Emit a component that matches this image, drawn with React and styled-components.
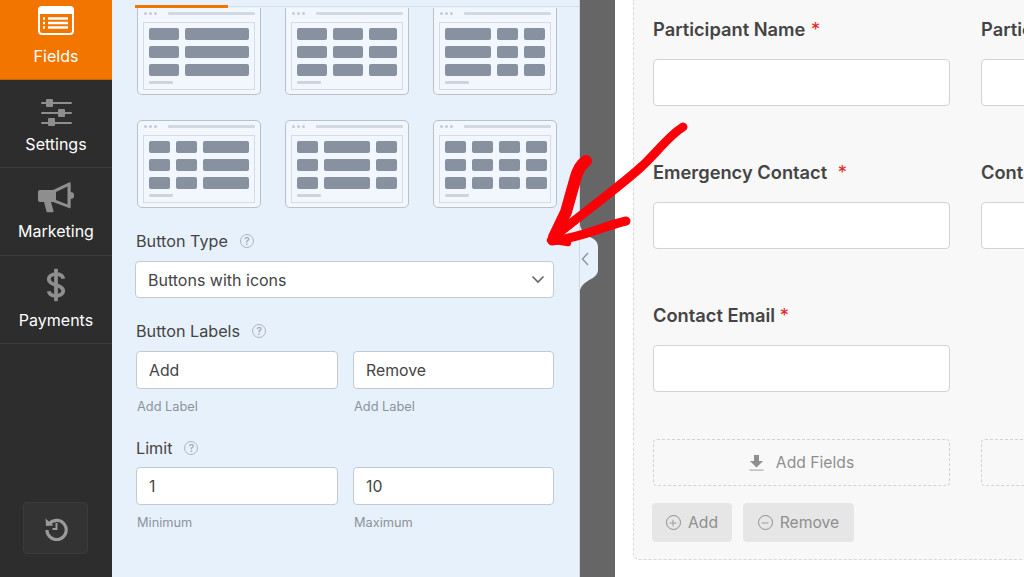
import React from "react";
import styled, { createGlobalStyle } from "styled-components";
import { Plus, Minus } from "lucide-react";

const GlobalStyle = createGlobalStyle`
  html, body {
    margin: 0;
    padding: 0;
    overflow: hidden;
    background: #fff;
  }
  * {
    box-sizing: border-box;
  }
`;

const Page = styled.div`
  position: relative;
  display: flex;
  width: 1024px;
  height: 577px;
  overflow: hidden;
  font-family: Inter, "Liberation Sans", sans-serif;
`;

const Sidebar = styled.nav`
  flex: 0 0 112px;
  display: flex;
  flex-direction: column;
  background: #2d2d2d;
`;

const NavItem = styled.div`
  height: ${({ $height }) => $height}px;
  display: flex;
  flex-direction: column;
  align-items: center;
  justify-content: flex-end;
  gap: ${({ $gap }) => $gap}px;
  padding-bottom: ${({ $pad }) => $pad}px;
  border-bottom: 1px solid ${({ $active }) => ($active ? "#c9620a" : "#3c3c3c")};
  background: ${({ $active }) => ($active ? "#f27500" : "transparent")};
  color: #fff;
  font-size: 16px;
  line-height: 18px;
`;

const SidebarFoot = styled.div`
  margin-top: auto;
  padding: 0 0 23px 23px;
`;

const UndoButton = styled.div`
  width: 65px;
  height: 52px;
  display: flex;
  align-items: center;
  justify-content: center;
  background: #333;
  border: 1px solid #3b3b3b;
  border-radius: 4px;
`;

const Panel = styled.section`
  flex: 0 0 468px;
  min-width: 0;
  padding: 5px 26px 0 24px;
  background: #e7f1fc;
  border-right: 1px solid #cfd6df;
`;

const TabLine = styled.div`
  display: flex;
  height: 3px;
  margin-left: -1px;
  margin-right: -26px;
`;

const TabActive = styled.div`
  width: 93px;
  background: #f27500;
`;

const TabRest = styled.div`
  flex: 1;
  height: 1px;
  background: #d5dde7;
  margin-top: 1px;
`;

const ThumbGrid = styled.div`
  display: grid;
  grid-template-columns: repeat(3, 124px);
  column-gap: 24px;
  row-gap: 25px;
  margin-left: 1px;
`;

const Thumb = styled.div`
  height: ${({ $cut }) => ($cut ? 87 : 88)}px;
  padding: ${({ $cut }) => ($cut ? "4px 5px 4.5px" : "3.5px 5px 4.5px")};
  background: #f2f7fd;
  border: 1.5px solid #b9c1cc;
  border-top-width: ${({ $cut }) => ($cut ? 0 : 1.5)}px;
  border-radius: ${({ $cut }) => ($cut ? "0 0 5px 5px" : "5px")};
  display: flex;
  flex-direction: column;
  gap: 7px;
`;

const ThumbTop = styled.div`
  flex: 0 0 3px;
  display: flex;
  align-items: center;
  gap: 2px;
  padding: 0 0 0 1px;
`;

const ThumbDot = styled.i`
  width: 3px;
  height: 3px;
  border-radius: 50%;
  background: #c5ccd6;
`;

const ThumbBar = styled.i`
  flex: 1;
  height: 3px;
  margin-left: 9px;
  background: #d0d9e4;
  border-radius: 1px;
`;

const ThumbFrame = styled.div`
  flex: 1;
  display: flex;
  flex-direction: column;
  gap: 6px;
  padding: 5px 5px 0;
  border: 1px solid #d5dce6;
`;

const ThumbRow = styled.div`
  display: grid;
  grid-template-columns: ${({ $cols }) => $cols};
  gap: 6px;
`;

const ThumbCell = styled.i`
  height: 12px;
  background: #87919f;
  border-radius: 2px;
`;

const ThumbFoot = styled.i`
  display: block;
  width: 24px;
  height: 3px;
  margin-top: -1px;
  background: #ccd4de;
  border-radius: 1px;
`;

const FieldBlock = styled.div`
  margin-top: ${({ $top }) => $top}px;
`;

const LabelRow = styled.div`
  display: flex;
  align-items: center;
  gap: 12px;
  height: 18px;
  color: #444;
  font-size: 16.2px;
`;

const Help = styled.span`
  width: 14px;
  height: 14px;
  display: flex;
  align-items: center;
  justify-content: center;
  border: 1.3px solid #aeb4bc;
  border-radius: 50%;
  color: #a3a9b2;
  font-size: 10px;
  font-weight: 600;
`;

const SelectBox = styled.div`
  height: 37px;
  margin: 11px -1px 0;
  display: flex;
  align-items: center;
  justify-content: space-between;
  padding: 0 8px 0 12px;
  background: #fff;
  border: 1px solid #c4cad2;
  border-radius: 4px;
  color: #444;
  font-size: 16px;
`;

const InputPair = styled.div`
  display: grid;
  grid-template-columns: 202px 201px;
  gap: 15px;
  margin-top: ${({ $top }) => $top}px;
`;

const PanelInput = styled.div`
  height: 38px;
  display: flex;
  align-items: center;
  padding: 0 12px;
  background: #fff;
  border: 1px solid #c4cad2;
  border-radius: 4px;
  color: #444;
  font-size: 15.8px;
`;

const Hint = styled.div`
  margin-top: 10px;
  margin-left: 1px;
  color: #8c929b;
  font-size: 12.8px;
  line-height: 15px;
`;

const Gutter = styled.div`
  flex: 0 0 35px;
  background: #666;
`;

const Canvas = styled.section`
  flex: 1;
  min-width: 0;
  padding: 0 0 17px 18px;
  background: #fff;
  overflow: hidden;
`;

const RepeaterBox = styled.div`
  width: 460px;
  height: 100%;
  padding: 19px 0 0 19px;
  background: #f8f8f8;
  border: 1px dashed #d8d8d8;
  border-top: 0;
  border-right: 0;
  border-radius: 0 0 0 6px;
`;

const CanvasRow = styled.div`
  display: grid;
  grid-template-columns: 297px 297px;
  gap: 31px;
  height: ${({ $height }) => $height}px;
`;

const CanvasField = styled.div`
  min-width: 0;
`;

const CanvasLabel = styled.div`
  height: 20px;
  color: #444;
  font-size: 18.3px;
  font-weight: 600;
  line-height: 20px;
  white-space: nowrap;

  & > em {
    margin-left: ${({ $mark }) => $mark}px;
    color: #e02b2b;
    font-style: normal;
    font-weight: 400;
  }
`;

const CanvasInput = styled.div`
  height: 47px;
  margin-top: 20px;
  background: #fff;
  border: 1px solid #d3d3d3;
  border-radius: 4px;
`;

const DropZone = styled.div`
  height: 47px;
  display: flex;
  align-items: center;
  justify-content: center;
  gap: 12px;
  border: 1px dashed #d2d2d2;
  border-radius: 4px;
  color: #8f8f8f;
  font-size: 15.7px;
`;

const ActionRow = styled.div`
  display: flex;
  gap: 11px;
  margin-top: 17px;
  margin-left: -1px;
`;

const ActionButton = styled.div`
  width: ${({ $width }) => $width}px;
  height: 39px;
  display: flex;
  align-items: center;
  justify-content: center;
  gap: 7px;
  background: #e6e6e6;
  border-radius: 4px;
  color: #8f8f8f;
  font-size: 15.7px;
`;

const RoundIcon = styled.span`
  width: 15px;
  height: 15px;
  display: flex;
  align-items: center;
  justify-content: center;
  border: 1.3px solid #8f8f8f;
  border-radius: 50%;
`;

const CollapseTab = styled.svg`
  position: absolute;
  left: 580px;
  top: 225px;
`;

const ArrowMark = styled.svg`
  position: absolute;
  left: 0;
  top: 0;
  pointer-events: none;
`;

const FieldsIcon = () => (
  <svg width="36" height="29" viewBox="0 0 36 29" fill="none">
    <rect x="1" y="1" width="34" height="27" rx="3" stroke="#fff" strokeWidth="2" />
    <path d="M1 3a2 2 0 0 1 2-2h30a2 2 0 0 1 2 2v5H1z" fill="#fff" />
    <path d="M10 12.5h20M10 17h20M10 21.5h20" stroke="#fff" strokeWidth="2.4" />
    <path d="M5 12.5h2M5 17h2M5 21.5h2" stroke="#fff" strokeWidth="2.4" />
  </svg>
);

const SlidersIcon = () => (
  <svg width="31" height="27" viewBox="0 0 31 27" fill="#8e8e8e">
    <rect x="0" y="3" width="31" height="2" rx="1" />
    <rect x="0" y="13" width="31" height="2" rx="1" />
    <rect x="0" y="23" width="31" height="2" rx="1" />
    <rect x="5" y="0" width="7" height="8" rx="1" />
    <rect x="17" y="10" width="7" height="8" rx="1" />
    <rect x="7" y="19" width="7" height="8" rx="1" />
  </svg>
);

const MegaphoneIcon = () => (
  <svg width="36" height="31" viewBox="0 0 36 31" fill="#8e8e8e">
    <path d="M2 8h13v12H2a2 2 0 0 1-2-2v-8a2 2 0 0 1 2-2z" />
    <path d="M6 20h7l2.500 9a1 1 0 0 1-1 1.200H9.500a1 1 0 0 1-1-.7z" />
    <path
      fillRule="evenodd"
      d="M15 8 31 .5a1.200 1.200 0 0 1 1.700 1.100V10a3.500 3.500 0 0 1 0 7v8a1.200 1.200 0 0 1-1.700 1.100L15 20zM18 10v8l11.500 4.600V4.600z"
    />
  </svg>
);

const DollarIcon = () => (
  <svg width="18" height="36" viewBox="0 0 20 36" fill="none" stroke="#8e8e8e" strokeWidth="4.200">
    <path d="M10 0v36" />
    <path d="M18 11c-.5-3.500-4-5-8-5-4.500 0-8 2-8 5.500C2 15 5 16.500 10 18c5 1.500 8 3 8 6.500 0 3.500-3.500 5.500-8 5.500-4 0-7.500-1.500-8-5" />
  </svg>
);

const HistoryIcon = () => (
  <svg width="26" height="26" viewBox="0 0 26 26" fill="none" stroke="#9a9a9a">
    <path d="M6.500 8.500A9.600 9.600 0 1 1 4 15" strokeWidth="3.200" />
    <path d="M2.500 3.500 3 11l7.500-.5z" fill="#9a9a9a" stroke="none" />
    <path d="M13.500 8v6H9.500" strokeWidth="2" />
  </svg>
);

const Chevron = () => (
  <svg width="14" height="9" viewBox="0 0 14 9" fill="none" stroke="#666" strokeWidth="1.600">
    <path d="M1.500 1.500 7 7l5.500-5.500" />
  </svg>
);

const DownloadGlyph = () => (
  <svg width="15" height="16" viewBox="0 0 15 16" fill="#8f8f8f">
    <path d="M5 0h5v6h4l-6.500 6.500L1 6h4z" />
    <rect x="0.500" y="14.500" width="14" height="1.200" fill="#a9adb3" />
  </svg>
);

const thumbs = [
  { cut: true, cols: "30px 1fr" },
  { cut: true, cols: "30px 30px 1fr" },
  { cut: true, cols: "1fr 21px 21px" },
  { cols: "21px 21px 1fr" },
  { cols: "21px 1fr 21px" },
  { cols: "21px 21px 21px 21px" },
];

const Thumbnail = ({ cut, cols }) => (
  <Thumb $cut={cut}>
    <ThumbTop>
      <ThumbDot />
      <ThumbDot />
      <ThumbDot />
      <ThumbBar />
    </ThumbTop>
    <ThumbFrame>
      {[0, 1, 2].map((i) => (
        <ThumbRow key={i} $cols={cols}>
          {cols.split(" ").map((_, j) => (
            <ThumbCell key={j} />
          ))}
        </ThumbRow>
      ))}
      <ThumbFoot />
    </ThumbFrame>
  </Thumb>
);

const App = () => {
  return (
    <Page>
      <GlobalStyle />
      <Sidebar>
        <NavItem $active $height={80} $gap={12} $pad={14}>
          <FieldsIcon />
          Fields
        </NavItem>
        <NavItem $height={88} $gap={9} $pad={14}>
          <SlidersIcon />
          Settings
        </NavItem>
        <NavItem $height={88} $gap={9} $pad={15}>
          <MegaphoneIcon />
          Marketing
        </NavItem>
        <NavItem $height={88} $gap={8} $pad={14}>
          <DollarIcon />
          Payments
        </NavItem>
        <SidebarFoot>
          <UndoButton>
            <HistoryIcon />
          </UndoButton>
        </SidebarFoot>
      </Sidebar>

      <Panel>
        <TabLine>
          <TabActive />
          <TabRest />
        </TabLine>
        <ThumbGrid>
          {thumbs.map((t, i) => (
            <Thumbnail key={i} cut={t.cut} cols={t.cols} />
          ))}
        </ThumbGrid>

        <FieldBlock $top={24}>
          <LabelRow>
            Button Type <Help>?</Help>
          </LabelRow>
          <SelectBox>
            Buttons with icons
            <Chevron />
          </SelectBox>
        </FieldBlock>

        <FieldBlock $top={24}>
          <LabelRow>
            Button Labels <Help>?</Help>
          </LabelRow>
          <InputPair $top={11}>
            <div>
              <PanelInput>Add</PanelInput>
              <Hint>Add Label</Hint>
            </div>
            <div>
              <PanelInput>Remove</PanelInput>
              <Hint>Add Label</Hint>
            </div>
          </InputPair>
        </FieldBlock>

        <FieldBlock $top={25}>
          <LabelRow>
            Limit <Help>?</Help>
          </LabelRow>
          <InputPair $top={10}>
            <div>
              <PanelInput>1</PanelInput>
              <Hint>Minimum</Hint>
            </div>
            <div>
              <PanelInput>10</PanelInput>
              <Hint>Maximum</Hint>
            </div>
          </InputPair>
        </FieldBlock>
      </Panel>

      <Gutter />

      <Canvas>
        <RepeaterBox>
          <CanvasRow $height={143}>
            <CanvasField>
              <CanvasLabel $mark={1}>
                Participant Name <em>*</em>
              </CanvasLabel>
              <CanvasInput />
            </CanvasField>
            <CanvasField>
              <CanvasLabel>Participant Email</CanvasLabel>
              <CanvasInput />
            </CanvasField>
          </CanvasRow>
          <CanvasRow $height={143}>
            <CanvasField>
              <CanvasLabel $mark={6}>
                Emergency Contact <em>*</em>
              </CanvasLabel>
              <CanvasInput />
            </CanvasField>
            <CanvasField>
              <CanvasLabel>Contact Phone</CanvasLabel>
              <CanvasInput />
            </CanvasField>
          </CanvasRow>
          <CanvasRow $height={134}>
            <CanvasField>
              <CanvasLabel $mark={0}>
                Contact Email <em>*</em>
              </CanvasLabel>
              <CanvasInput />
            </CanvasField>
          </CanvasRow>
          <CanvasRow>
            <DropZone>
              <DownloadGlyph />
              Add Fields
            </DropZone>
            <DropZone />
          </CanvasRow>
          <ActionRow>
            <ActionButton $width={80}>
              <RoundIcon>
                <Plus size={10} color="#8f8f8f" strokeWidth={2} />
              </RoundIcon>
              Add
            </ActionButton>
            <ActionButton $width={111}>
              <RoundIcon>
                <Minus size={10} color="#8f8f8f" strokeWidth={2} />
              </RoundIcon>
              Remove
            </ActionButton>
          </ActionRow>
        </RepeaterBox>
      </Canvas>

      <CollapseTab width="20" height="66" viewBox="0 0 20 66">
        <path d="M0 0c2 8 6 10 12 13 4 2 6 5 6 9v23c0 4-3 7-7 9-5 3-9 5-11 11z" fill="#e7f1fc" />
        <path d="M8 28 2.500 34 8 40" fill="none" stroke="#8d96a3" strokeWidth="1.500" />
      </CollapseTab>

      <ArrowMark width="1024" height="577" viewBox="0 0 1024 577" fill="none" stroke="#fb0007" strokeLinecap="round" strokeLinejoin="round">
        <path d="M683 127C668 136 655 155 640 168C620 186 590 208 555 236" strokeWidth="9" />
        <path d="M586 161C580 165 577 172 575 180L566 212L554 237" strokeWidth="12" />
        <path d="M626 221C600 227 585 237 552 241" strokeWidth="9" />
        <path d="M550 240L568 243" strokeWidth="6.500" />
      </ArrowMark>
    </Page>
  );
};

export default App;
